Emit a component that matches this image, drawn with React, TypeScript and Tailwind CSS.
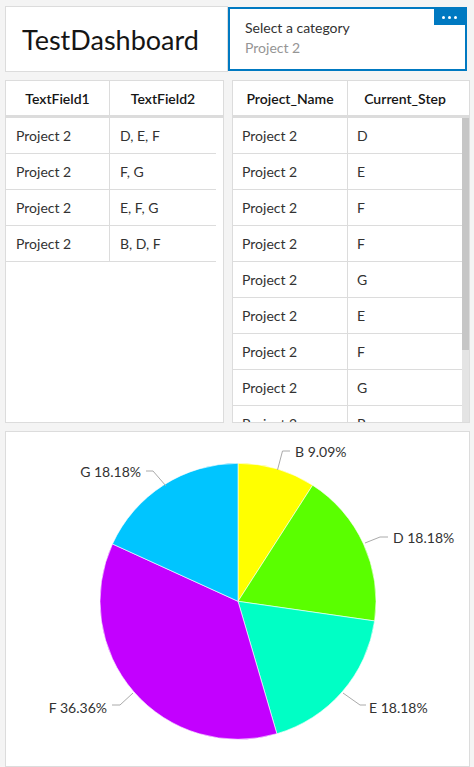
import React from 'react';

const leftRows = [
  ['Project 2', 'D, E, F'],
  ['Project 2', 'F, G'],
  ['Project 2', 'E, F, G'],
  ['Project 2', 'B, D, F'],
];

const rightRows = [
  ['Project 2', 'D'],
  ['Project 2', 'E'],
  ['Project 2', 'F'],
  ['Project 2', 'F'],
  ['Project 2', 'G'],
  ['Project 2', 'E'],
  ['Project 2', 'F'],
  ['Project 2', 'G'],
  ['Project 2', 'B'],
];

const slices = [
  { label: 'B', pct: 9.09, color: '#ffff00' },
  { label: 'D', pct: 18.18, color: '#5aff00' },
  { label: 'E', pct: 18.18, color: '#00ffc5' },
  { label: 'F', pct: 36.36, color: '#c300ff' },
  { label: 'G', pct: 18.18, color: '#00c5ff' },
];

const CX = 238;
const CY = 601.3;
const R = 138;

function pt(deg: number) {
  const a = (deg * Math.PI) / 180;
  return [CX + R * Math.sin(a), CY - R * Math.cos(a)];
}

const PieChart: React.FC = () => {
  const total = slices.reduce((s, x) => s + x.pct, 0);
  let acc = 0;
  const paths = slices.map((s) => {
    const start = (acc / total) * 360;
    acc += s.pct;
    const end = (acc / total) * 360;
    const [x1, y1] = pt(start);
    const [x2, y2] = pt(end);
    const large = end - start > 180 ? 1 : 0;
    return (
      <path
        key={s.label}
        d={`M${CX} ${CY} L${x1} ${y1} A${R} ${R} 0 ${large} 1 ${x2} ${y2} Z`}
        fill={s.color}
        stroke="#ffffff"
        strokeWidth={0.6}
      />
    );
  });

  return (
    <svg width={464} height={340} viewBox="6 432 464 340" className="block">
      {paths}
      <g fill="none" stroke="#aaaaaa" strokeWidth={1}>
        <polyline points="277.5,470 282.5,451 290,451" />
        <polyline points="166,486 153,471 146,471" />
        <polyline points="365,543 380,537 388,537" />
        <polyline points="343,693 360,705 366,705" />
        <polyline points="133,693 120,705 112,705" />
      </g>
      <g fill="#323232" fontSize={14} style={{ fontFamily: 'Lato, sans-serif' }}>
        <text x={295} y={457}>B 9.09%</text>
        <text x={141} y={477} textAnchor="end">G 18.18%</text>
        <text x={393} y={543}>D 18.18%</text>
        <text x={369} y={712.5}>E 18.18%</text>
        <text x={107} y={712.5} textAnchor="end">F 36.36%</text>
      </g>
    </svg>
  );
};

export default function App() {
  return (
    <div className="w-[474px] h-[767px] overflow-hidden bg-[#f4f4f4] pl-[5px] pt-[6px] flex flex-col font-['Lato',sans-serif] text-[#323232]">
      <div className="flex h-[66px]">
        <div className="w-[223px] h-[66px] bg-white border border-[#dcdcdc] flex items-center pl-[16px]">
          <span className="text-[27px] text-[#151515] leading-none">TestDashboard</span>
        </div>
        <div className="w-[239px] h-[64px] mt-[1px] bg-white border-2 border-[#0079c1] relative pl-[15px] pt-[9px]">
          <div className="text-[14px] leading-[20px] text-[#323232]">Select a category</div>
          <div className="text-[14px] leading-[20px] text-[#959595]">Project 2</div>
          <div className="absolute top-0 right-0 w-[31px] h-[16px] bg-[#0079c1] flex items-center justify-center gap-[3px]">
            <span className="w-[3px] h-[3px] rounded-full bg-white" />
            <span className="w-[3px] h-[3px] rounded-full bg-white" />
            <span className="w-[3px] h-[3px] rounded-full bg-white" />
          </div>
        </div>
      </div>

      <div className="flex gap-[8px] h-[343px] mt-[8px]">
        <div className="w-[219px] h-[343px] bg-white border border-[#dcdcdc] flex flex-col overflow-hidden">
          <div className="flex h-[37px] border-b-[3px] border-[#dcdcdc] shrink-0">
            <div className="w-[104px] border-r border-[#dcdcdc] flex items-center justify-center text-[14px] font-semibold text-[#151515]">TextField1</div>
            <div className="w-[106px] flex items-center justify-center text-[14px] font-semibold text-[#151515]">TextField2</div>
          </div>
          {leftRows.map((r, i) => (
            <div key={i} className="flex w-[210px] h-[36px] border-b border-[#dcdcdc] shrink-0 text-[14px]">
              <div className="w-[104px] border-r border-[#dcdcdc] flex items-center pl-[10px]">{r[0]}</div>
              <div className="w-[106px] flex items-center pl-[10px]">{r[1]}</div>
            </div>
          ))}
        </div>

        <div className="w-[238px] h-[343px] bg-white border border-[#dcdcdc] flex flex-col overflow-hidden">
          <div className="flex h-[37px] border-b-[3px] border-[#dcdcdc] shrink-0">
            <div className="w-[115px] border-r border-[#dcdcdc] flex items-center justify-center text-[14px] font-semibold text-[#151515]">Project_Name</div>
            <div className="w-[114px] flex items-center justify-center text-[14px] font-semibold text-[#151515]">Current_Step</div>
          </div>
          <div className="flex flex-1 overflow-hidden">
            <div className="w-[229px] flex flex-col overflow-hidden">
              {rightRows.map((r, i) => (
                <div key={i} className="flex h-[36px] border-b border-[#dcdcdc] shrink-0 text-[14px]">
                  <div className="w-[115px] border-r border-[#dcdcdc] flex items-center pl-[9px]">{r[0]}</div>
                  <div className="w-[114px] flex items-center pl-[9px]">{r[1]}</div>
                </div>
              ))}
            </div>
            <div className="w-[7px] bg-[#e4e4e4] flex flex-col">
              <div className="h-[232px] bg-[#c6c6c6]" />
            </div>
          </div>
        </div>
      </div>

      <div className="w-[465px] flex-1 mt-[8px] bg-white border border-[#dcdcdc] overflow-hidden">
        <PieChart />
      </div>
    </div>
  );
}
